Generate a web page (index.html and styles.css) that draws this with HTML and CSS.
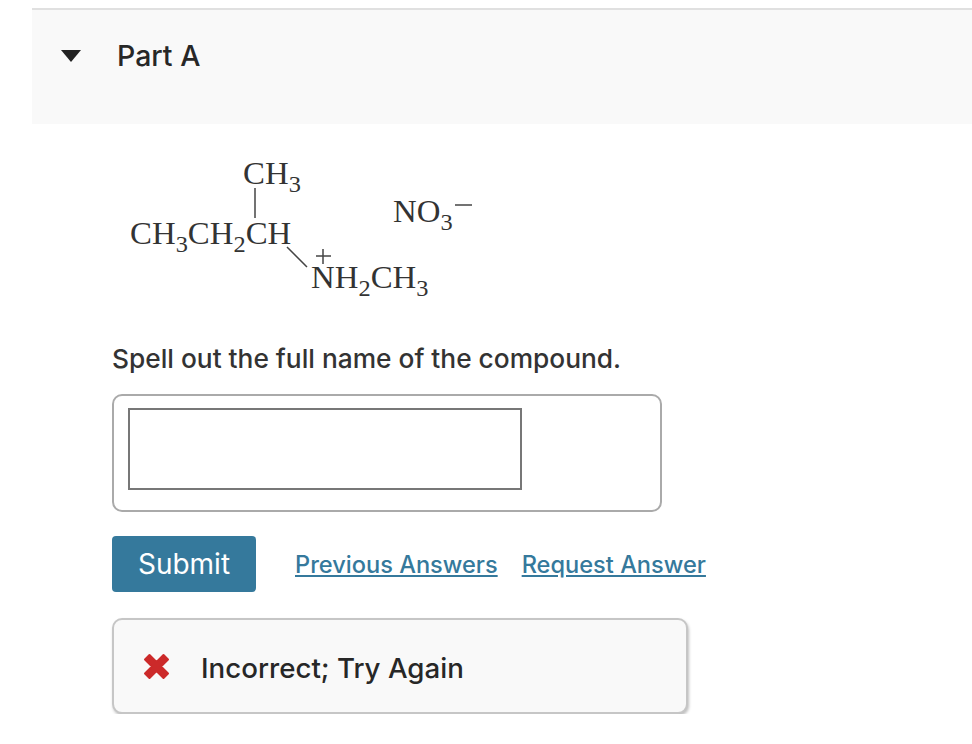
FILE: index.html
```html
<!DOCTYPE html>
<html lang="en">
<head>
    <meta charset="UTF-8">
    <title>Part A</title>
    <link rel="stylesheet" href="styles.css">
</head>
<body>
    <div class="part-header">
        <span class="caret"></span>
        <h2>Part A</h2>
    </div>

    <div class="part-body">
        <svg class="compound" width="400" height="170" viewBox="0 0 400 170">
            <g class="formula">
                <text transform="translate(131 34) scale(1.06 1)">CH<tspan class="sub" dy="8">3</tspan></text>
                <text transform="translate(18 94) scale(1.06 1)">CH<tspan class="sub" dy="8">3</tspan><tspan dy="-8">CH</tspan><tspan class="sub" dy="8">2</tspan><tspan dy="-8">CH</tspan></text>
                <text transform="translate(281 72) scale(1.06 1)">NO<tspan class="sub" dy="8">3</tspan></text>
                <text transform="translate(199 138) scale(1.06 1)">NH<tspan class="sub" dy="8">2</tspan><tspan dy="-8">CH</tspan><tspan class="sub" dy="8">3</tspan></text>
            </g>
            <g class="bonds">
                <line x1="143" y1="38" x2="143" y2="68"/>
                <line x1="175" y1="97" x2="195" y2="117"/>
                <line x1="343" y1="55" x2="360" y2="55"/>
                <line x1="204" y1="106" x2="219" y2="106"/>
                <line x1="211" y1="99" x2="211" y2="114"/>
            </g>
        </svg>

        <p class="prompt">Spell out the full name of the compound.</p>

        <div class="answer-box">
            <input class="answer-input" type="text">
        </div>

        <div class="actions">
            <button class="submit-btn">Submit</button>
            <a class="action-link" href="#">Previous Answers</a>
            <a class="action-link" href="#">Request Answer</a>
        </div>

        <div class="feedback">
            <svg class="x-icon" width="27" height="27" viewBox="0 0 27 27">
                <path d="M13.5 9 L6.5 2 L2 6.5 L9 13.5 L2 20.5 L6.5 25 L13.5 18 L20.5 25 L25 20.5 L18 13.5 L25 6.5 L20.5 2 Z"/>
            </svg>
            <span class="feedback-text">Incorrect; Try Again</span>
        </div>
    </div>
</body>
</html>
```

FILE: styles.css
```css
body {
    margin: 0;
    padding-top: 8px;
    font-family: "Inter", "Liberation Sans", sans-serif;
    color: #272727;
    background-color: white;
}

.part-header {
    display: flex;
    align-items: flex-start;
    height: 114px;
    margin-left: 32px;
    border-top: 2px solid #e0e0e0;
    background-color: #f9f9f9;
}

.caret {
    width: 0;
    height: 0;
    margin: 40px 0 0 29px;
    border-left: 10px solid transparent;
    border-right: 10px solid transparent;
    border-top: 12px solid #222;
}

.part-header h2 {
    margin: 27px 0 0 36px;
    font-size: 28.5px;
    line-height: 38px;
    font-weight: 500;
}

.part-body {
    padding-left: 112px;
}

.compound {
    display: block;
    margin-top: 26px;
}

.formula text {
    font-family: "Liberation Serif", serif;
    font-size: 31px;
    fill: #333;
}

.formula .sub {
    font-size: 23px;
}

.bonds line {
    stroke: #444;
    stroke-width: 1.5;
}

.prompt {
    margin: 21px 0 0;
    font-size: 26.3px;
    line-height: 36px;
    font-weight: 500;
    color: #333;
}

.answer-box {
    box-sizing: border-box;
    width: 550px;
    height: 118px;
    margin-top: 17px;
    padding: 12px 14px;
    border: 2px solid #aaa;
    border-radius: 10px;
}

.answer-input {
    display: block;
    box-sizing: border-box;
    width: 394px;
    height: 82px;
    border: 2px solid #777;
    background-color: white;
}

.actions {
    display: flex;
    align-items: center;
    gap: 24px;
    margin-top: 24px;
}

.submit-btn {
    width: 144px;
    height: 56px;
    margin-right: 15px;
    border: none;
    border-radius: 4px;
    background-color: #35799c;
    color: white;
    font-family: inherit;
    font-size: 28px;
}

.action-link {
    color: #35799c;
    font-size: 23.6px;
    font-weight: 500;
    text-decoration: underline;
}

.feedback {
    display: flex;
    align-items: center;
    box-sizing: border-box;
    width: 576px;
    height: 96px;
    margin-top: 26px;
    padding-left: 29px;
    border: 2px solid #c6c6c6;
    border-radius: 10px;
    background-color: #f9f9f9;
    box-shadow: 1px 2px 3px rgba(0,0,0,0.25);
    font-size: 27.7px;
    font-weight: 500;
}

.feedback-text {
    padding-top: 3px;
}

.x-icon {
    flex-shrink: 0;
    margin-right: 31px;
    fill: #cc2a2a;
    stroke: #cc2a2a;
    stroke-width: 2;
    stroke-linejoin: round;
}
```
